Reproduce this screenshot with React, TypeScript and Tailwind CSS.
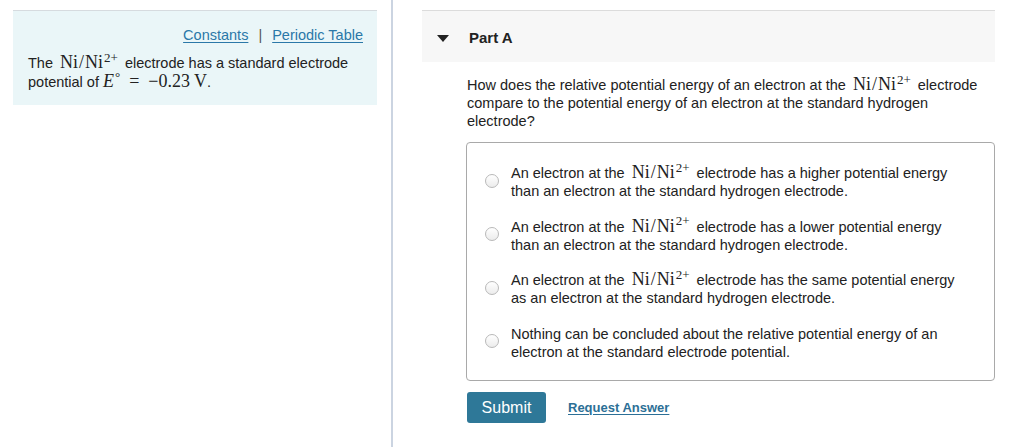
import React from 'react';

const NiCouple = () => (
  <span className="font-['Liberation_Serif','Times_New_Roman',serif] text-[18px] leading-[10px] mx-[3px]">
    Ni<span className="mx-[1px]">/</span>Ni<sup className="text-[13px] ml-[1px]">2+</sup>
  </span>
);

const options = [
  ['electrode has a higher potential energy', 'than an electron at the standard hydrogen electrode.'],
  ['electrode has a lower potential energy', 'than an electron at the standard hydrogen electrode.'],
  ['electrode has the same potential energy', 'as an electron at the standard hydrogen electrode.'],
];

const Radio = () => (
  <span className="shrink-0 w-[14px] h-[14px] rounded-full border border-[#b9b9b9] bg-gradient-to-b from-white to-[#ececec] -mt-[3px]" />
);

export default function App() {
  return (
    <div className="w-[1024px] h-[447px] flex bg-white text-[#222] font-['Liberation_Sans',Arial,sans-serif] text-[14.5px] overflow-hidden">
      {/* left column */}
      <div className="w-[391px] shrink-0 pl-[13px] pt-[10px]">
        <div className="w-[364px] h-[95px] border-t border-[#d6dbdf] bg-[#eaf6f8] pl-[15px] pr-[14px] pt-[16px]">
          <div className="flex justify-end gap-[10px] text-[#2b78a8] leading-[17px]">
            <span className="underline underline-offset-2">Constants</span>
            <span className="text-[#555]">|</span>
            <span className="underline underline-offset-2">Periodic Table</span>
          </div>
          <p className="mt-[10px] leading-[19px]">
            The <NiCouple /> electrode has a standard electrode
            <br />
            potential of{' '}
            <span className="font-['Liberation_Serif','Times_New_Roman',serif] text-[18px] leading-[10px]">
              <i>E</i>
              <sup className="text-[13px] ml-[1px]">°</sup>
              <span className="mx-[9px]">=</span>−0.23<span className="ml-[4px]">V</span>
            </span>
            .
          </p>
        </div>
      </div>

      {/* divider */}
      <div className="w-[2px] shrink-0 bg-[#cbd4e1]" />

      {/* right column */}
      <div className="pl-[29px] pt-[10px] w-[602px] shrink-0">
        <div className="h-[52px] border-t border-[#dcdcdc] bg-[#f7f7f7] flex items-center pl-[15px] pt-[3px]">
          <svg width="12" height="7" viewBox="0 0 12 7">
            <polygon points="0,0 12,0 6,7" fill="#222" />
          </svg>
          <span className="ml-[20px] font-bold text-[15px]">Part A</span>
        </div>

        <div className="pl-[45px] pr-[10px]">
          <p className="mt-[14px] leading-[18px]">
            How does the relative potential energy of an electron at the <NiCouple /> electrode
            <br />
            compare to the potential energy of an electron at the standard hydrogen
            <br />
            electrode?
          </p>

          <div className="mt-[12px] -ml-[1px] w-[529px] h-[239px] border border-[#a9a9a9] rounded-[4px] pl-[18px] pt-[21px] flex flex-col gap-[17.5px]">
            {options.map(([a, b], i) => (
              <div key={i} className="flex items-center gap-[12px]">
                <Radio />
                <p className="leading-[18px]">
                  An electron at the <NiCouple /> {a}
                  <br />
                  {b}
                </p>
              </div>
            ))}
            <div className="flex items-center gap-[12px]">
              <Radio />
              <p className="leading-[18px]">
                Nothing can be concluded about the relative potential energy of an
                <br />
                electron at the standard electrode potential.
              </p>
            </div>
          </div>

          <div className="mt-[11px] flex items-center gap-[22px]">
            <button className="w-[79px] h-[31px] rounded-[3px] bg-[#2e7898] text-white text-[16px]">
              Submit
            </button>
            <span className="font-bold text-[13px] text-[#2c6f96] underline underline-offset-2">
              Request Answer
            </span>
          </div>
        </div>
      </div>
    </div>
  );
}
